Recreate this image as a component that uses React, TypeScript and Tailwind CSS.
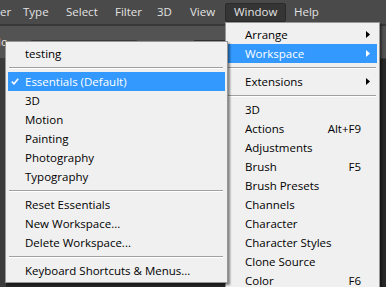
import React from "react";

const font = "font-['Open_Sans','Noto_Sans',sans-serif]";

function Arrow({ white }: { white?: boolean }) {
  return (
    <svg width="4" height="7" viewBox="0 0 4 7" className="block">
      <path d="M0 0 L4 3.5 L0 7 Z" fill={white ? "#ffffff" : "#000000"} />
    </svg>
  );
}

function Check() {
  return (
    <svg width="8" height="7" viewBox="0 0 8 7" className="block">
      <path d="M0.8 3.6 L3 5.8 L7.2 0.8" stroke="#ffffff" strokeWidth="1.6" fill="none" />
    </svg>
  );
}

function Sep({ left }: { left?: boolean }) {
  return (
    <div className={`h-[9px] flex items-center ${left ? "pl-[1px] pr-[2px]" : "pl-[1px] pr-[1px]"}`}>
      <div className="w-full border-t border-[#a0a0a0] border-b border-b-white" />
    </div>
  );
}

type Item = { label: string; shortcut?: string; arrow?: boolean; active?: boolean; check?: boolean };

function Row({ it, pl }: { it: Item; pl: string }) {
  return (
    <div
      className={`h-[19px] flex items-center ${pl} ${it.active ? "bg-[#3399ff] text-white" : "text-black"}`}
    >
      <div className="flex-1 whitespace-nowrap leading-none">{it.label}</div>
      {it.shortcut ? <div className="pr-[16px] leading-none">{it.shortcut}</div> : null}
      {it.arrow ? (
        <div className="pr-[7px]">
          <Arrow white={it.active} />
        </div>
      ) : null}
    </div>
  );
}

export default function App() {
  const menus = [
    { t: "er", w: "w-[15px]", pl: "pl-0" },
    { t: "Type", w: "w-[43px]", pl: "pl-[8px]" },
    { t: "Select", w: "w-[49px]", pl: "pl-[8px]" },
    { t: "Filter", w: "w-[42px]", pl: "pl-[8px]" },
    { t: "3D", w: "w-[33px]", pl: "pl-[8px]" },
    { t: "View", w: "w-[43px]", pl: "pl-[8px]" },
    { t: "Window", w: "w-[61px]", pl: "pl-[8px]", active: true },
    { t: "Help", w: "w-[50px]", pl: "pl-[8px]" },
  ];

  const right: (Item | "sep")[] = [
    { label: "Arrange", arrow: true },
    { label: "Workspace", arrow: true, active: true },
    "sep",
    { label: "Extensions", arrow: true },
    "sep",
    { label: "3D" },
    { label: "Actions", shortcut: "Alt+F9" },
    { label: "Adjustments" },
    { label: "Brush", shortcut: "F5" },
    { label: "Brush Presets" },
    { label: "Channels" },
    { label: "Character" },
    { label: "Character Styles" },
    { label: "Clone Source" },
    { label: "Color", shortcut: "F6" },
  ];

  const left: (Item | "sep")[] = [
    { label: "testing" },
    "sep",
    { label: "Essentials (Default)", active: true, check: true },
    { label: "3D" },
    { label: "Motion" },
    { label: "Painting" },
    { label: "Photography" },
    { label: "Typography" },
    "sep",
    { label: "Reset Essentials" },
    { label: "New Workspace..." },
    { label: "Delete Workspace..." },
    "sep",
    { label: "Keyboard Shortcuts & Menus..." },
  ];

  return (
    <div className={`relative w-[386px] h-[287px] overflow-hidden bg-[#2b2b2b] ${font} text-[11.5px]`}>
      {/* menu bar */}
      <div className="h-[24px] bg-[#4a4a4a] flex items-center text-[#e2e2e2]">
        {menus.map((m) => (
          <div
            key={m.t}
            className={`${m.w} ${m.pl} shrink-0 h-[19px] flex items-center whitespace-nowrap ${
              m.active ? "bg-[#353535] border border-[#2a2a2a] rounded-[2px] pl-[7px]" : ""
            }`}
          >
            {m.t}
          </div>
        ))}
      </div>
      <div className="h-[2px] bg-[#383838]" />
      {/* options bar */}
      <div className="h-[32px] bg-[#535353] flex items-center text-[#e2e2e2]">
        <div className="w-[32px] pl-0 -ml-[2px] whitespace-nowrap">lo</div>
        <div className="w-[108px] h-[18px] mt-[14px] bg-[#6a6a6a] border border-[#3a3a3a] rounded-[2px] pl-[6px] text-[#e8e8e8]">
          Normal
        </div>
        <div className="ml-[8px] w-[48px] whitespace-nowrap mt-[10px]">Opacity:</div>
        <div className="w-[40px] h-[18px] mt-[14px] bg-[#2f2f2f] pl-[4px] text-[#e8e8e8]">100%</div>
      </div>
      <div className="h-[1px] bg-[#3a3a3a]" />
      <div className="flex h-[230px]">
        <div className="w-[6px] bg-[#3b3b3b]" />
        <div className="flex-1 bg-[#282828]" />
      </div>

      {/* Window menu */}
      <div className="absolute left-[225px] top-[22px] w-[155px] bg-[#f0f0f0] border border-[#979797] pl-[1px] pr-[2px] pt-[2px] pb-[3px] shadow-[2px_2px_2px_rgba(0,0,0,0.45)]">
        {right.map((it, i) =>
          it === "sep" ? <Sep key={i} /> : <Row key={i} it={it} pl="pl-[18px]" />
        )}
      </div>

      {/* Workspace submenu */}
      <div className="absolute left-[5px] top-[41px] w-[223px] bg-[#f0f0f0] border border-[#979797] p-[2px] shadow-[2px_2px_2px_rgba(0,0,0,0.45)]">
        {left.map((it, i) =>
          it === "sep" ? (
            <Sep key={i} left />
          ) : (
            <div key={i} className="relative">
              <Row it={it} pl="pl-[17px]" />
              {it.check ? (
                <div className="absolute left-[3px] top-[6px]">
                  <Check />
                </div>
              ) : null}
            </div>
          )
        )}
      </div>
    </div>
  );
}
